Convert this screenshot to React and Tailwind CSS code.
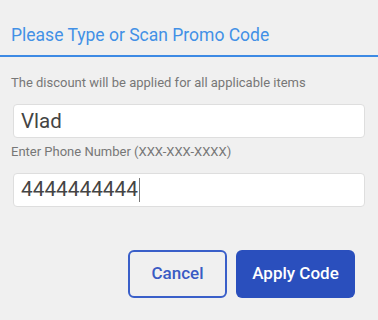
const PromoCodeDialog = () => {
  return (
    <div className="w-[378px] h-[320px] bg-[#f0f0f0] font-['Roboto',sans-serif] overflow-hidden">
      <div className="pt-[25px] pb-[10px] px-[11px] border-b-2 border-[#3d8ae4]">
        <h2 className="text-[17.5px] leading-[20px] text-[#4290e6]">
          Please Type or Scan Promo Code
        </h2>
      </div>

      <p className="mt-[18px] px-[11px] text-[13px] leading-[16px] text-[#777777]">
        The discount will be applied for all applicable items
      </p>

      <div className="mt-[13px] mx-[13px] h-[34px] bg-white border border-[#dedede] rounded-[4px] flex items-center px-[7px] text-[20.5px] text-[#444444]">
        Vlad
      </div>

      <p className="mt-[6px] px-[11px] text-[13px] leading-[16px] text-[#777777]">
        Enter Phone Number (XXX-XXX-XXXX)
      </p>

      <div className="mt-[13px] mx-[13px] h-[34px] bg-white border border-[#dedede] rounded-[4px] flex items-center px-[7px] text-[20.8px] text-[#444444]">
        4444444444
        <span className="ml-[1px] w-[1px] h-[24px] bg-[#777777]"></span>
      </div>

      <div className="mt-[43px] pr-[23px] flex justify-end gap-[9px]">
        <button className="w-[99px] h-[48px] rounded-[6px] border-2 border-[#3a5fc9] text-[#3a5bc4] text-[17px] font-medium">
          Cancel
        </button>
        <button className="w-[119px] h-[48px] rounded-[6px] bg-[#2a4fbd] text-white text-[17px] font-medium">
          Apply Code
        </button>
      </div>
    </div>
  );
};

export default PromoCodeDialog;
